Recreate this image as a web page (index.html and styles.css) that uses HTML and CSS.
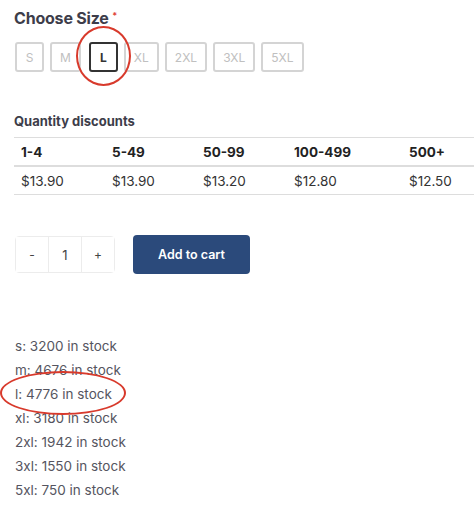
FILE: index.html
```html
<!DOCTYPE html>
<html lang="en">
<head>
    <meta charset="UTF-8">
    <meta name="viewport" content="width=device-width, initial-scale=1.0">
    <title>Choose Size</title>
    <link rel="stylesheet" href="styles.css">
</head>
<body>

<div class="product">
    <h2 class="size-title">Choose Size <span class="required">*</span></h2>

    <div class="size-list">
        <button class="size-btn">S</button>
        <button class="size-btn">M</button>
        <button class="size-btn selected">L</button>
        <button class="size-btn">XL</button>
        <button class="size-btn">2XL</button>
        <button class="size-btn">3XL</button>
        <button class="size-btn">5XL</button>
        <span class="mark mark-size"></span>
    </div>

    <h3 class="discount-title">Quantity discounts</h3>
    <table class="discounts">
        <thead>
            <tr>
                <th class="c1">1-4</th>
                <th class="c2">5-49</th>
                <th class="c3">50-99</th>
                <th class="c4">100-499</th>
                <th>500+</th>
            </tr>
        </thead>
        <tbody>
            <tr>
                <td>$13.90</td>
                <td>$13.90</td>
                <td>$13.20</td>
                <td>$12.80</td>
                <td>$12.50</td>
            </tr>
        </tbody>
    </table>

    <div class="cart-row">
        <div class="qty">
            <button class="qty-btn">-</button>
            <span class="qty-value">1</span>
            <button class="qty-btn">+</button>
        </div>
        <button class="add-btn">Add to cart</button>
    </div>

    <ul class="stock">
        <li>s: 3200 in stock</li>
        <li>m: 4676 in stock</li>
        <li class="marked">l: 4776 in stock<span class="mark mark-stock"></span></li>
        <li>xl: 3180 in stock</li>
        <li>2xl: 1942 in stock</li>
        <li>3xl: 1550 in stock</li>
        <li>5xl: 750 in stock</li>
    </ul>
</div>

</body>
</html>
```

FILE: styles.css
```css
body {
    font-family: Inter, "Noto Sans", Arial, sans-serif;
    background-color: #fff;
    color: #3d3d4a;
    margin: 0;
    padding: 0;
    overflow: hidden;
}
.product {
    padding: 8px 0 0 14px;
}
.size-title {
    font-size: 16px;
    font-weight: 700;
    line-height: 20px;
    margin: 0;
    color: #3d3d4a;
    letter-spacing: -0.2px;
}
.required {
    color: #e0443a;
    font-size: 9px;
    vertical-align: top;
    position: relative;
    top: -2px;
}
.size-list {
    position: relative;
    display: flex;
    gap: 6px;
    margin-top: 14px;
    padding-left: 1px;
}
.size-btn {
    height: 30px;
    min-width: 29px;
    padding: 0 8px;
    border: 2px solid #d4d4d4;
    border-radius: 3px;
    background: #fff;
    color: #c0c0c0;
    font-family: inherit;
    font-size: 12px;
}
.size-btn.selected {
    border-color: #333;
    color: #333;
    font-weight: 700;
    margin-left: 2px;
}
.mark {
    position: absolute;
    border: 2px solid #d83a2c;
    border-radius: 50%;
}
.mark-size {
    left: 62px;
    top: -16px;
    width: 51px;
    height: 56px;
}
.discount-title {
    font-size: 13px;
    font-weight: 700;
    line-height: 16px;
    margin: 41px 0 0;
    color: #3d3d4a;
}
.discounts {
    width: 470px;
    border-collapse: collapse;
    margin-top: 8px;
    font-size: 13.5px;
    color: #222;
}
.discounts th, .discounts td {
    text-align: left;
    padding: 0 7px;
    height: 27px;
}
.discounts th {
    font-weight: 700;
    border-top: 1px solid #ddd;
    border-bottom: 2px solid #ddd;
}
.discounts td {
    border-bottom: 1px solid #ddd;
    color: #333;
}
.discounts .c1, .discounts .c2, .discounts .c3 {
    width: 77px;
}
.discounts .c4 {
    width: 101px;
}
.cart-row {
    display: flex;
    align-items: center;
    gap: 18px;
    margin-top: 40px;
}
.qty {
    display: flex;
    height: 35px;
    border: 1px solid #ececec;
    border-radius: 4px;
    margin-left: 1px;
}
.qty-btn, .qty-value {
    width: 32px;
    display: flex;
    align-items: center;
    justify-content: center;
    background: #fff;
    border: none;
    font-family: inherit;
    font-size: 12px;
    color: #444;
    padding: 0;
}
.qty-value {
    border-left: 1px solid #ececec;
    border-right: 1px solid #ececec;
    font-size: 13px;
}
.add-btn {
    width: 117px;
    height: 39px;
    background-color: #2b4a7b;
    color: #fff;
    border: none;
    border-radius: 4px;
    font-family: inherit;
    font-size: 12.5px;
    font-weight: 600;
}
.stock {
    list-style: none;
    margin: 60px 0 0;
    padding: 0 0 0 1px;
    font-size: 13.5px;
    line-height: 24px;
    color: #555560;
}
.marked {
    position: relative;
}
.mark-stock {
    left: -15px;
    top: -11px;
    width: 122px;
    height: 40px;
}
```
